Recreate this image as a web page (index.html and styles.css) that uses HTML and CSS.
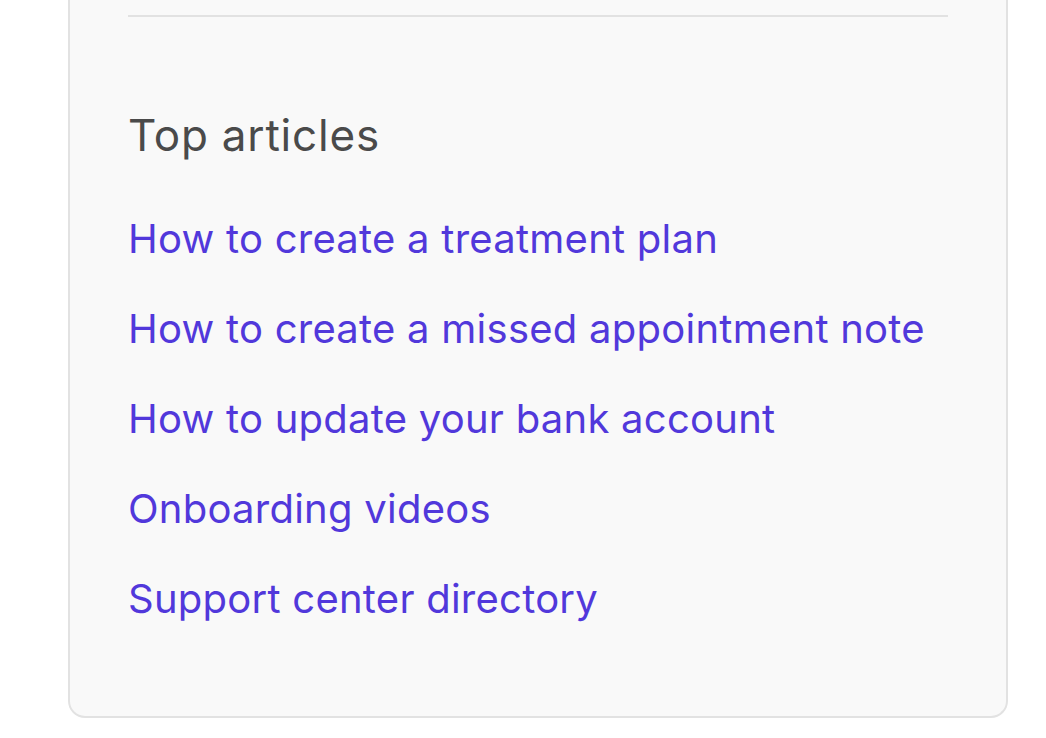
FILE: index.html
```html
<!DOCTYPE html>
<html lang="en">
<head>
    <meta charset="UTF-8">
    <meta name="viewport" content="width=device-width, initial-scale=1.0">
    <title>Help center</title>
    <link rel="stylesheet" href="styles.css">
</head>
<body>
    <div class="page">
        <section class="help-card">
            <hr class="divider">
            <h2 class="section-title">Top articles</h2>
            <ul class="article-list">
                <li><a href="#">How to create a treatment plan</a></li>
                <li><a href="#">How to create a missed appointment note</a></li>
                <li><a href="#">How to update your bank account</a></li>
                <li><a href="#">Onboarding videos</a></li>
                <li><a href="#">Support center directory</a></li>
            </ul>
        </section>
    </div>
</body>
</html>
```

FILE: styles.css
```css
* {
    box-sizing: border-box;
    margin: 0;
    padding: 0;
}

body {
    font-family: 'Inter', 'Noto Sans', sans-serif;
    background: #fff;
    color: #4a4a4a;
}

.page {
    padding: 0 38px 21px 68px;
}

.help-card {
    background: #f9f9f9;
    border: 2px solid #e2e2e2;
    border-top: none;
    border-radius: 0 0 17px 17px;
    padding: 15px 58px 87px;
}

.divider {
    border: none;
    height: 2px;
    background: #e2e2e2;
}

.section-title {
    font-size: 44px;
    font-weight: 400;
    line-height: 1.2;
    letter-spacing: 0.8px;
    color: #4a4a4a;
    margin-top: 92px;
    margin-bottom: 47px;
}

.article-list {
    list-style: none;
    display: flex;
    flex-direction: column;
    gap: 30px;
}

.article-list a {
    font-size: 40px;
    line-height: 60px;
    letter-spacing: 0.25px;
    color: #5138db;
    text-decoration: none;
}
```
